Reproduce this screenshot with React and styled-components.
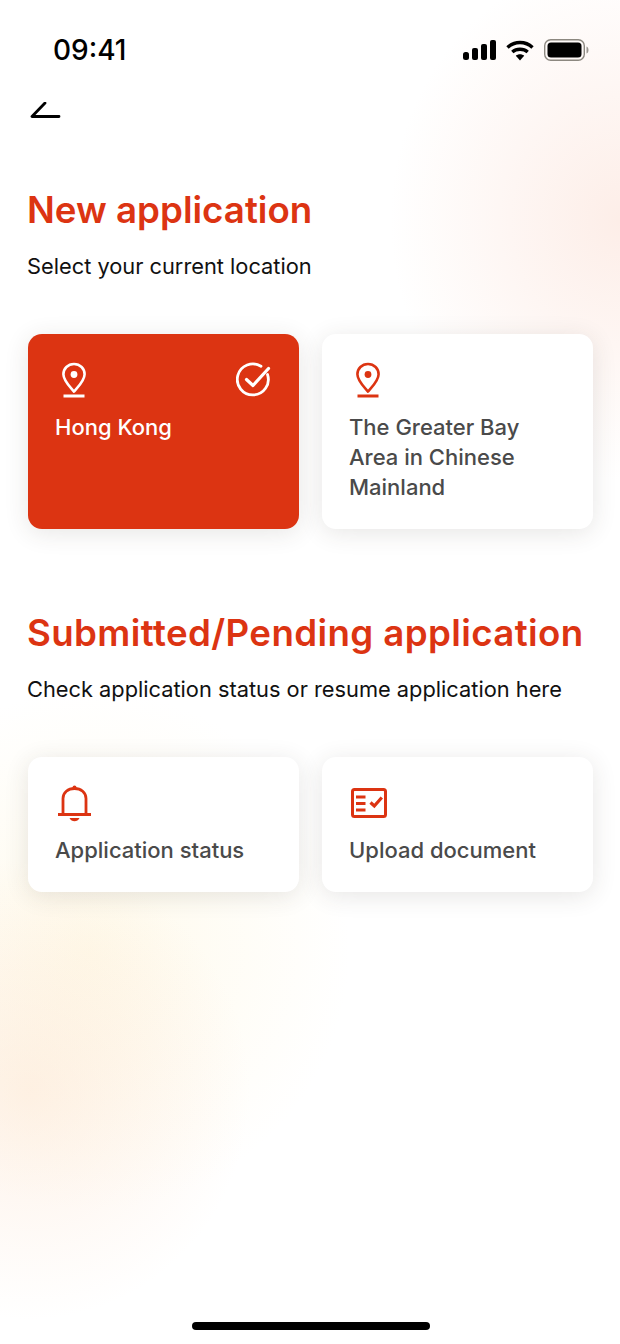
import React from 'react';
import styled, { createGlobalStyle } from 'styled-components';

const GlobalStyle = createGlobalStyle`
html, body {
    margin: 0;
    padding: 0;
    background: #fff;
}
* {
    box-sizing: border-box;
}
`;

const RED = '#dc3412';

function Pin({ color }) {
    return (
        <svg width="26" height="36" viewBox="0 0 26 36" fill="none">
            <path d="M13 2C6.9 2 2.4 6.6 2.4 12.3c0 6.5 6.2 12.2 10.6 17.3 4.4-5.1 10.6-10.8 10.6-17.3C23.6 6.6 19.100 2 13 2z" stroke={color} strokeWidth="2.600" strokeLinejoin="round" />
            <circle cx="13" cy="12.500" r="3.400" fill={color} />
            <rect x="2.500" y="32.500" width="21" height="3" fill={color} />
        </svg>
    );
}

function Check() {
    return (
        <svg width="36" height="36" viewBox="0 0 36 36" fill="none">
            <path d="M31.500 12.500A15.500 15.500 0 1 1 25 4.300" stroke="#fff" strokeWidth="2.800" strokeLinecap="round" />
            <path d="M10.500 17.500l6.500 6L32.500 6.500" stroke="#fff" strokeWidth="3.200" strokeLinecap="round" strokeLinejoin="round" />
        </svg>
    );
}

function Bell() {
    return (
        <svg width="36" height="38" viewBox="0 1 36 38" fill="none">
            <path d="M6 30V14.500C6 8.500 11 4.500 17.500 4.500S29 8.500 29 14.500V30" stroke={RED} strokeWidth="2.800" />
            <circle cx="17.500" cy="3.500" r="2" fill={RED} />
            <rect x="1" y="29" width="33" height="3" fill={RED} />
            <path d="M12.500 34h10c-1 2.500-3 3.200-5 3.200s-4-.7-5-3.200z" fill={RED} />
        </svg>
    );
}

function Doc() {
    return (
        <svg width="36" height="33" viewBox="0 -3 36 33" fill="none">
            <rect x="1.500" y="1.500" width="33" height="27" rx="2" stroke={RED} strokeWidth="3" />
            <path d="M5 9h9.500M5 15.500h9.500M5 22h9.500" stroke={RED} strokeWidth="2.800" />
            <path d="M19.500 14.500l3.800 3.500 7.500-8.500" stroke={RED} strokeWidth="3.200" />
        </svg>
    );
}

export default function App() {
    return (
        <Page>
            <GlobalStyle />
            <StatusBar>
                <Clock>09:41</Clock>
                <StatusIcons>
                    <svg width="33" height="20" viewBox="0 0 33 20">
                        <rect x="0" y="12" width="6" height="8" rx="2.500" fill="#000" />
                        <rect x="9" y="8" width="6" height="12" rx="2" fill="#000" />
                        <rect x="18" y="4" width="6" height="16" rx="2" fill="#000" />
                        <rect x="27" y="0" width="6" height="20" rx="2" fill="#000" />
                    </svg>
                    <svg width="28" height="21" viewBox="0 0 28 21" fill="none">
                        <path d="M1.500 7.500C8.500 .8 19.500 .8 26.500 7.500" stroke="#000" strokeWidth="3.400" />
                        <path d="M6.300 12C10.500 8.300 17.500 8.300 21.700 12" stroke="#000" strokeWidth="3.400" />
                        <path d="M9.800 15.800c2.500-2 5.900-2 8.400 0L14 20.500z" fill="#000" />
                    </svg>
                    <svg width="45" height="22" viewBox="0 0 45 22">
                        <rect x="0.700" y="0.700" width="39.600" height="20.600" rx="6" fill="none" stroke="#8c8880" strokeWidth="1.400" />
                        <rect x="3.500" y="3.500" width="34" height="15" rx="3.500" fill="#000" />
                        <path d="M42.500 7.500c1.500.5 2 2 2 3.500s-.5 3-2 3.500z" fill="#9a9690" />
                    </svg>
                </StatusIcons>
            </StatusBar>
            <BackRow>
                <svg width="32" height="18" viewBox="0 0 32 18" fill="none">
                    <path d="M16 1L3 14.500H30" stroke="#000" strokeWidth="2.800" strokeLinecap="round" strokeLinejoin="round" />
                </svg>
            </BackRow>

            <Section>
                <Title>New application</Title>
                <Subtitle>Select your current location</Subtitle>
                <CardRow>
                    <Card $active $tall>
                        <CardTop $indent={6}>
                            <Pin color="#fff" />
                            <Check />
                        </CardTop>
                        <CardLabel $active>Hong Kong</CardLabel>
                    </Card>
                    <Card $tall>
                        <CardTop $indent={6}>
                            <Pin color={RED} />
                        </CardTop>
                        <CardLabel>The Greater Bay Area in Chinese Mainland</CardLabel>
                    </Card>
                </CardRow>
            </Section>

            <Section $second>
                <Title $tracking={0.38}>Submitted/Pending application</Title>
                <Subtitle>Check application status or resume application here</Subtitle>
                <CardRow>
                    <Card>
                        <CardTop $indent={2}>
                            <Bell />
                        </CardTop>
                        <CardLabel>Application status</CardLabel>
                    </Card>
                    <Card>
                        <CardTop $indent={2}>
                            <Doc />
                        </CardTop>
                        <CardLabel>Upload document</CardLabel>
                    </Card>
                </CardRow>
            </Section>

            <HomeBar />
        </Page>
    );
}

const Page = styled.div`
position: relative;
width: 620px;
height: 1344px;
overflow: hidden;
font-family: "Inter", "Liberation Sans", sans-serif;
background:
    radial-gradient(ellipse 230px 260px at 620px 220px, rgba(250, 214, 200, 0.42), rgba(250, 214, 200, 0) 100%),
    radial-gradient(ellipse 220px 230px at 30px 1090px, rgba(252, 218, 190, 0.36), rgba(252, 218, 190, 0) 100%),
    radial-gradient(ellipse 260px 260px at 90px 950px, rgba(254, 242, 205, 0.4), rgba(254, 242, 205, 0) 100%),
    #fff;
`;

const StatusBar = styled.div`
display: flex;
align-items: center;
justify-content: space-between;
height: 44px;
margin-top: 28px;
padding: 0 31px 0 53px;
`;

const Clock = styled.span`
font-size: 28px;
font-weight: 500;
line-height: 44px;
color: #000;
`;

const StatusIcons = styled.div`
display: flex;
align-items: center;
gap: 10px;
`;

const BackRow = styled.div`
display: flex;
height: 18px;
margin-top: 30px;
padding-left: 29px;
`;

const Section = styled.section`
padding: 0 27px;
margin-top: ${props => props.$second ? '82px' : '68px'};
`;

const Title = styled.h1`
margin: 0;
font-size: 36.7px;
font-weight: 600;
letter-spacing: ${props => props.$tracking || 0}px;
line-height: 44px;
color: ${RED};
white-space: nowrap;
`;

const Subtitle = styled.p`
margin: 19px 0 0;
font-size: 21.8px;
line-height: 30px;
color: #111;
white-space: nowrap;
`;

const CardRow = styled.div`
display: grid;
grid-template-columns: 271px 271px;
gap: 23px;
margin: 53px 0 0 1px;
`;

const Card = styled.div`
height: ${props => props.$tall ? '195px' : '135px'};
padding: 28px 27px 0;
border-radius: 14px;
background: ${props => props.$active ? RED : '#fff'};
box-shadow: 0 4px 24px rgba(60, 50, 40, 0.12);
`;

const CardTop = styled.div`
display: flex;
align-items: flex-start;
justify-content: space-between;
height: 37px;
padding-left: ${props => props.$indent}px;
`;

const CardLabel = styled.div`
margin-top: 13px;
font-size: 22px;
font-weight: 500;
line-height: 30px;
color: ${props => props.$active ? '#fff' : '#4a4a4a'};
`;

const HomeBar = styled.div`
position: absolute;
left: 192px;
bottom: 14px;
width: 238px;
height: 8px;
border-radius: 4px;
background: #000;
`;
